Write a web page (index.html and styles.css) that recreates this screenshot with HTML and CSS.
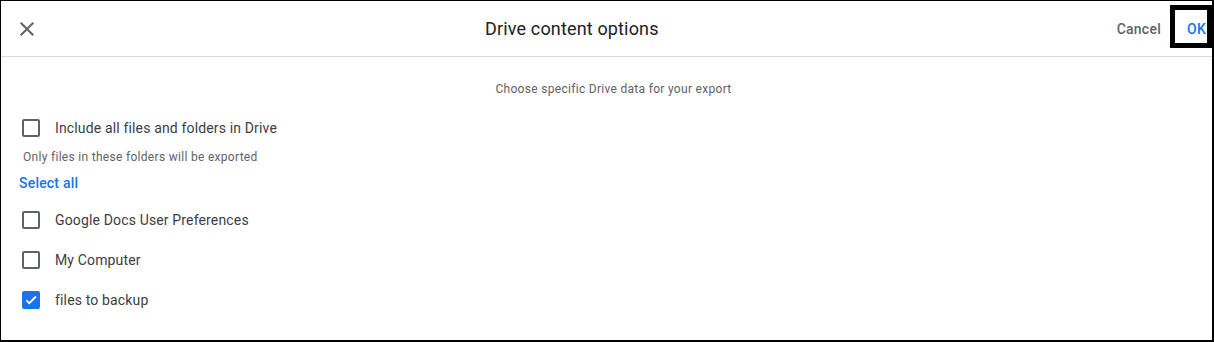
FILE: index.html
```html
<!DOCTYPE html>
<html>
<head>
<meta charset="utf-8">
<link rel="stylesheet" href="styles.css">
</head>
<body>
<div class="dialog">
  <div class="header">
    <button class="close" aria-label="Close">
      <svg width="24" height="24" viewBox="0 0 24 24"><path fill="#5f6368" d="M19 6.41L17.59 5 12 10.59 6.41 5 5 6.41 10.59 12 5 17.59 6.41 19 12 13.41 17.59 19 19 17.59 13.41 12z"/></svg>
    </button>
    <div class="title">Drive content options</div>
    <div class="actions">
      <span class="btn cancel">Cancel</span>
      <span class="btn ok">OK</span>
    </div>
  </div>
  <div class="content">
    <div class="subtitle">Choose specific Drive data for your export</div>
    <div class="row">
      <span class="cb"></span>
      <span class="label">Include all files and folders in Drive</span>
    </div>
    <div class="helper">Only files in these folders will be exported</div>
    <div class="select-all">Select all</div>
    <div class="row row-first">
      <span class="cb"></span>
      <span class="label">Google Docs User Preferences</span>
    </div>
    <div class="row">
      <span class="cb"></span>
      <span class="label">My Computer</span>
    </div>
    <div class="row">
      <span class="cb checked">
        <svg width="14" height="14" viewBox="0 0 24 24"><path fill="none" stroke="#fff" stroke-width="3.2" d="M4 12.5l5 5L20.5 6"/></svg>
      </span>
      <span class="label">files to backup</span>
    </div>
  </div>
  <div class="highlight"></div>
</div>
</body>
</html>
```
FILE: styles.css
```css
html, body {
  margin: 0;
  padding: 0;
  background: #fff;
}
body {
  font-family: Roboto, "Liberation Sans", Arial, sans-serif;
}
.dialog {
  position: relative;
  box-sizing: border-box;
  width: 1214px;
  height: 342px;
  border-style: solid;
  border-color: #000;
  border-width: 1px 2px 2px 1px;
  background: #fff;
}
.header {
  display: flex;
  align-items: center;
  height: 55px;
  border-bottom: 1px solid #dadce0;
}
.close {
  display: flex;
  align-items: center;
  justify-content: center;
  width: 24px;
  height: 24px;
  margin-left: 14px;
  padding: 0;
  border: 0;
  background: none;
}
.title {
  flex: 1;
  text-align: center;
  font-size: 18px;
  color: #202124;
  letter-spacing: 0.15px;
  padding-right: 12px;
}
.actions {
  display: flex;
  align-items: center;
  gap: 26px;
  padding-right: 6px;
}
.btn {
  font-size: 14px;
  font-weight: 500;
  letter-spacing: 0.25px;
}
.cancel { color: #5f6368; }
.ok { color: #1a73e8; }
.content {
  padding-top: 24px;
}
.subtitle {
  text-align: center;
  font-size: 12px;
  line-height: 16px;
  color: #5f6368;
  letter-spacing: 0.3px;
  padding-left: 14px;
  margin-bottom: 11px;
}
.row {
  display: flex;
  align-items: center;
  height: 40px;
  padding-left: 21px;
}
.row-first {
  margin-top: 7px;
}
.cb {
  box-sizing: border-box;
  width: 18px;
  height: 18px;
  border: 2px solid #5f6368;
  border-radius: 2px;
  display: flex;
  align-items: center;
  justify-content: center;
  margin-right: 15px;
}
.cb.checked {
  background: #1a73e8;
  border-color: #1a73e8;
}
.label {
  font-size: 14px;
  color: #3c4043;
  letter-spacing: 0.15px;
}
.helper {
  margin-top: 1px;
  font-size: 12px;
  line-height: 16px;
  color: #5f6368;
  letter-spacing: 0.3px;
  padding-left: 22px;
}
.select-all {
  margin-top: 8px;
  font-size: 14px;
  line-height: 20px;
  font-weight: 500;
  color: #1a73e8;
  letter-spacing: 0.2px;
  padding-left: 18px;
}
.highlight {
  position: absolute;
  right: 0;
  top: 4px;
  box-sizing: border-box;
  width: 42px;
  height: 43px;
  border: 5px solid #000;
}
```
